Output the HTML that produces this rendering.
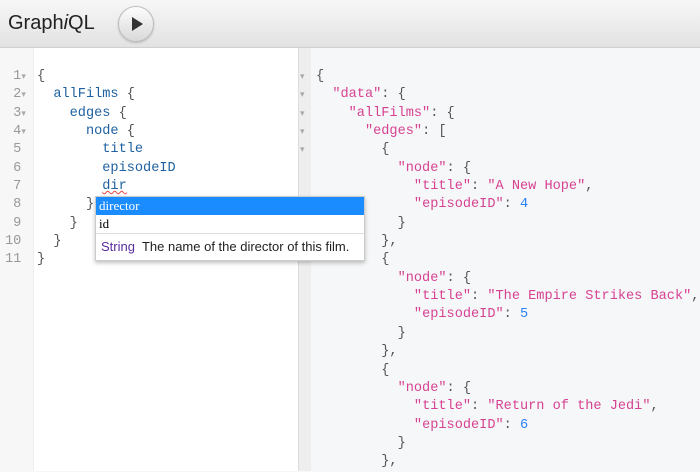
<!DOCTYPE html>
<html><head><style>
body{margin:0;width:700px;height:471px;overflow:hidden;font-family:"Liberation Sans",sans-serif;position:relative;background:#f6f7f8}
#hdr{position:absolute;left:0;top:0;width:700px;height:47px;background:linear-gradient(#f7f7f7,#e2e2e2);border-bottom:1px solid #d0d0d0}
#title{position:absolute;left:8px;top:12px;font-size:20px;color:#222}
#btn{position:absolute;left:118px;top:6px;width:34px;height:34px;border-radius:50%;background:linear-gradient(#fdfdfd,#d9d9d9);border:1px solid #bdbdbd;box-shadow:0 1px 2px rgba(0,0,0,.2)}
#gut{position:absolute;left:0;top:48px;width:33px;height:423px;background:#f7f7f7;border-right:1px solid #eee}
#ed{position:absolute;left:34px;top:48px;width:264px;height:423px;background:#fff}
#div{position:absolute;left:298px;top:48px;width:12px;height:423px;background:#eeeeee;border-left:1px solid #ddd}
.code{position:absolute;font-family:"Liberation Mono",monospace;font-size:13.6px;line-height:18.35px;white-space:pre;margin:0}
.n{color:#999}.k{color:#1f61a0}.p{color:#555}.s{color:#d64292}.num{color:#2882f9}.a{color:#aaa;font-size:9px}
#ac{position:absolute;left:95px;top:196px;width:268px;height:63px;background:#fff;border:1px solid #ccc;box-shadow:0 2px 4px rgba(0,0,0,.25);font-family:"Liberation Serif",serif;font-size:13px}
#ac .r{height:18px;line-height:18px;padding-left:3px}
#ac .sel{background:#1a8cff;color:#fff}
#ac .d{border-top:1px solid #ddd;height:26px;line-height:26px;padding-left:5px;font-family:"Liberation Sans",sans-serif;font-size:13px;color:#222}
</style></head><body>
<div id="hdr"><div id="title">Graph<i>i</i>QL</div><div id="btn"><svg width="34" height="34"><path d="M13 10 L24 17 L13 24 Z" fill="#333"/></svg></div></div>
<div id="gut"></div><div id="ed"></div><div id="div"></div>
<pre class="code n" style="left:5px;top:68px"> 1<span class="a">▾</span>
 2<span class="a">▾</span>
 3<span class="a">▾</span>
 4<span class="a">▾</span>
 5
 6
 7
 8
 9
10
11</pre>
<pre class="code k" style="left:37px;top:68px"><span class="p">{</span>
  allFilms <span class="p">{</span>
    edges <span class="p">{</span>
      node <span class="p">{</span>
        title
        episodeID
        <span style="text-decoration:underline wavy #e44;text-decoration-thickness:1px">dir</span>
      <span class="p">}</span>
    <span class="p">}</span>
  <span class="p">}</span>
<span class="p">}</span></pre>
<pre class="code" style="left:300px;top:68px"><span class="a">▾</span>
<span class="a">▾</span>
<span class="a">▾</span>
<span class="a">▾</span>
<span class="a">▾</span></pre>
<pre class="code p" style="left:316px;top:68px">{
  <span class="s">"data"</span>: {
    <span class="s">"allFilms"</span>: {
      <span class="s">"edges"</span>: [
        {
          <span class="s">"node"</span>: {
            <span class="s">"title"</span>: <span class="s">"A New Hope"</span>,
            <span class="s">"episodeID"</span>: <span class="num">4</span>
          }
        },
        {
          <span class="s">"node"</span>: {
            <span class="s">"title"</span>: <span class="s">"The Empire Strikes Back"</span>,
            <span class="s">"episodeID"</span>: <span class="num">5</span>
          }
        },
        {
          <span class="s">"node"</span>: {
            <span class="s">"title"</span>: <span class="s">"Return of the Jedi"</span>,
            <span class="s">"episodeID"</span>: <span class="num">6</span>
          }
        },</pre>
<div id="ac"><div class="r sel">director</div><div class="r">id</div><div class="d"><span style="color:#5a2ca0">String</span>&nbsp; The name of the director of this film.</div></div>
</body></html>
